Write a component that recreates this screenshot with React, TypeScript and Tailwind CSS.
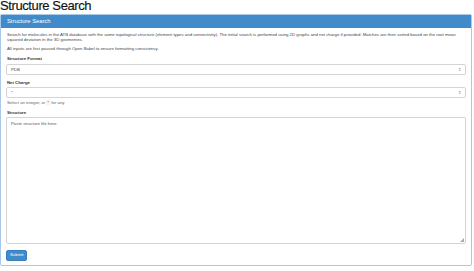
import React from 'react'

export default function App() {
  return (
    <div className="w-[474px] h-[271px] overflow-hidden bg-white" style={{ fontFamily: '"Liberation Sans", Arial, sans-serif' }}>
      <h1 className="text-[13px] leading-none text-[#111] mt-[-1px] mb-[2px] tracking-[-0.4px] [-webkit-text-stroke:0.15px_#111]">Structure Search</h1>

      <div className="w-[472px] border border-[#a9c9e8] rounded-[2px]">
        {/* Header */}
        <div className="h-[13px] bg-[#428bca] text-white text-[5.8px] flex items-center px-[6px]">Structure Search</div>

        {/* Body */}
        <form className="px-[5px] pt-[4px] pb-[4px] text-[4.3px] leading-[5px] text-[#444]">
          <p className="mb-[4px] px-[1px]">
            Search for molecules in the ATB database with the same topological structure (element types and connectivity). The initial search is performed using 2D graphs and net charge if provided. Matches are then sorted based on the root mean squared deviation in the 3D geometries.
          </p>
          <p className="mb-[5px] px-[1px]">All inputs are first passed through Open Babel to ensure formatting consistency.</p>

          <label className="block font-bold mb-[3px] px-[1px] text-[#333]">Structure Format</label>
          <div className="h-[11px] border border-[#d4d4d4] rounded-[2px] flex items-center justify-between px-[4px] mb-[5px]">
            <span>PDB</span>
            <span className="text-[4px] text-[#888]">⇕</span>
          </div>

          <label className="block font-bold mb-[2px] px-[1px] text-[#333]">Net Charge</label>
          <div className="h-[11px] border border-[#d4d4d4] rounded-[2px] flex items-center justify-between px-[4px] mb-[2px]">
            <span>*</span>
            <span className="text-[4px] text-[#888]">⇕</span>
          </div>
          <p className="mb-[5px] px-[1px] text-[#666]">
            Select an integer, or <span className="text-[#c7254e] bg-[#f9f2f4] px-[1px]">*</span> for any
          </p>

          <label className="block font-bold mb-[2px] px-[1px] text-[#333]">Structure</label>
          <div className="relative h-[127px] border border-[#d4d4d4] rounded-[2px] px-[4px] py-[3px] text-[#555]">
            Paste structure file here.
            <span className="absolute right-[1px] bottom-[1px] w-0 h-0 border-l-[4px] border-l-transparent border-b-[4px] border-b-[#aaa]" />
          </div>

          <button type="button" className="mt-[6px] h-[11px] px-[3px] bg-[#428bca] border border-[#357ebd] rounded-[2px] text-white text-[4.3px] leading-none">Submit</button>
        </form>
      </div>
    </div>
  )
}
